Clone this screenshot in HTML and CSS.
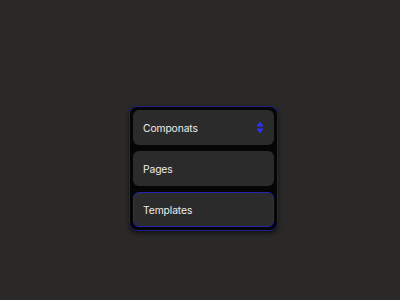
FILE: index.html
```html
<!DOCTYPE html>
<html>
<head>
<meta charset="utf-8">
<link rel="stylesheet" href="styles.css">
</head>
<body>
<div class="stage">
  <div class="menu">
    <div class="item">
      <span>Componats</span>
      <svg class="sort" width="8" height="13" viewBox="0 0 8 13"><path d="M4 0.5 L7.5 5.5 L0.5 5.5 Z" fill="#2f2fff"/><path d="M4 12.5 L7.5 7.5 L0.5 7.5 Z" fill="#2f2fff"/></svg>
    </div>
    <div class="item">
      <span>Pages</span>
    </div>
    <div class="item active">
      <span>Templates</span>
    </div>
  </div>
</div>
</body>
</html>
```
FILE: styles.css
```css
html, body {
  margin: 0;
  padding: 0;
  background: #2a2928;
  width: 400px;
  height: 300px;
  overflow: hidden;
}
.stage {
  padding: 106px 0 0 129px;
}
.menu {
  width: 141px;
  padding: 3px;
  border: 1px solid #1f1f8c;
  border-radius: 8px;
  background: #050505;
  display: flex;
  flex-direction: column;
  gap: 6px;
  box-shadow: 0 2px 4px rgba(0,0,0,0.6);
}
.item {
  height: 35px;
  box-sizing: border-box;
  border-radius: 6px;
  background: #2c2b2b;
  display: flex;
  align-items: center;
  justify-content: space-between;
  padding: 0 10px 0 10px;
  font-family: Inter, "Noto Sans", sans-serif;
  font-size: 10.3px;
  letter-spacing: -0.1px;
  color: #ececec;
}
.item.active {
  border: 1px solid #2424b0;
  padding-left: 9px;
}
.sort {
  display: block;
}
```
